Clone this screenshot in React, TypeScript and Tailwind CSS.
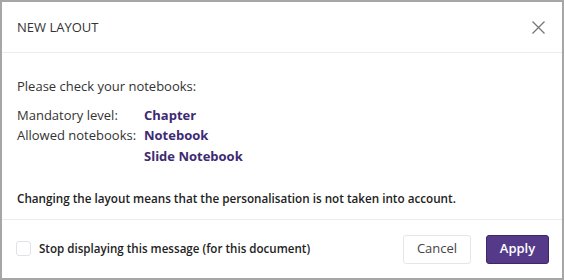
import { useState } from 'react';

export default function App() {
  const [stop, setStop] = useState(false);

  return (
    <div className="w-[564px] h-[280px] bg-white border-2 border-[#a6a6a6] flex flex-col text-[#333] font-['Open_Sans',sans-serif]">
      {/* Header */}
      <div className="h-[51px] flex items-center justify-between pl-[15px] pr-[17px] border-b border-[#ebebf0] shrink-0">
        <h1 className="text-[13px] pt-[1px]">NEW LAYOUT</h1>
        <button className="text-[#777] w-[14px] h-[14px] flex items-center justify-center">
          <svg width="13" height="13" viewBox="0 0 13 13" fill="none" stroke="currentColor" strokeWidth="1.3">
            <path d="M0.5 0.5L12.5 12.5M12.5 0.5L0.5 12.5" />
          </svg>
        </button>
      </div>

      {/* Body */}
      <div className="flex-1 pl-[15px] pr-4 pt-[24px]">
        <p className="text-[13px] leading-[18px]">Please check your notebooks:</p>
        <div className="mt-[10px] grid grid-cols-[127px_1fr] text-[13px] leading-[20px]">
          <span>Mandatory level:</span>
          <span className="font-bold text-[#3d2a72]">Chapter</span>
          <span>Allowed notebooks:</span>
          <span className="font-bold text-[#3d2a72]">Notebook</span>
          <span></span>
          <span className="font-bold text-[#3d2a72] mt-[1px]">Slide Notebook</span>
        </div>
        <p className="mt-[24px] text-[11.7px] font-semibold text-[#222] leading-[16px]">
          Changing the layout means that the personalisation is not taken into account.
        </p>
      </div>

      {/* Footer */}
      <div className="h-[59px] shrink-0 border-t border-[#ebebf0] flex items-center justify-between pl-[14px] pr-[13px]">
        <label className="flex items-center gap-[8px] cursor-pointer">
          <input
            type="checkbox"
            checked={stop}
            onChange={(e) => setStop(e.target.checked)}
            className="appearance-none w-[15px] h-[15px] rounded-[3px] border border-[#e2e2e6] bg-white checked:bg-[#563a8a]"
          />
          <span className="text-[11.6px] font-semibold text-[#222]">
            Stop displaying this message (for this document)
          </span>
        </label>
        <div className="flex items-center gap-[15px]">
          <button className="w-[68px] h-[29px] rounded-[3px] border border-[#e6e6ea] bg-white text-[13px] text-[#444]">
            Cancel
          </button>
          <button className="w-[63px] h-[29px] rounded-[3px] border border-[#3f2766] bg-[#563a8a] text-[13px] font-semibold text-white">
            Apply
          </button>
        </div>
      </div>
    </div>
  );
}
